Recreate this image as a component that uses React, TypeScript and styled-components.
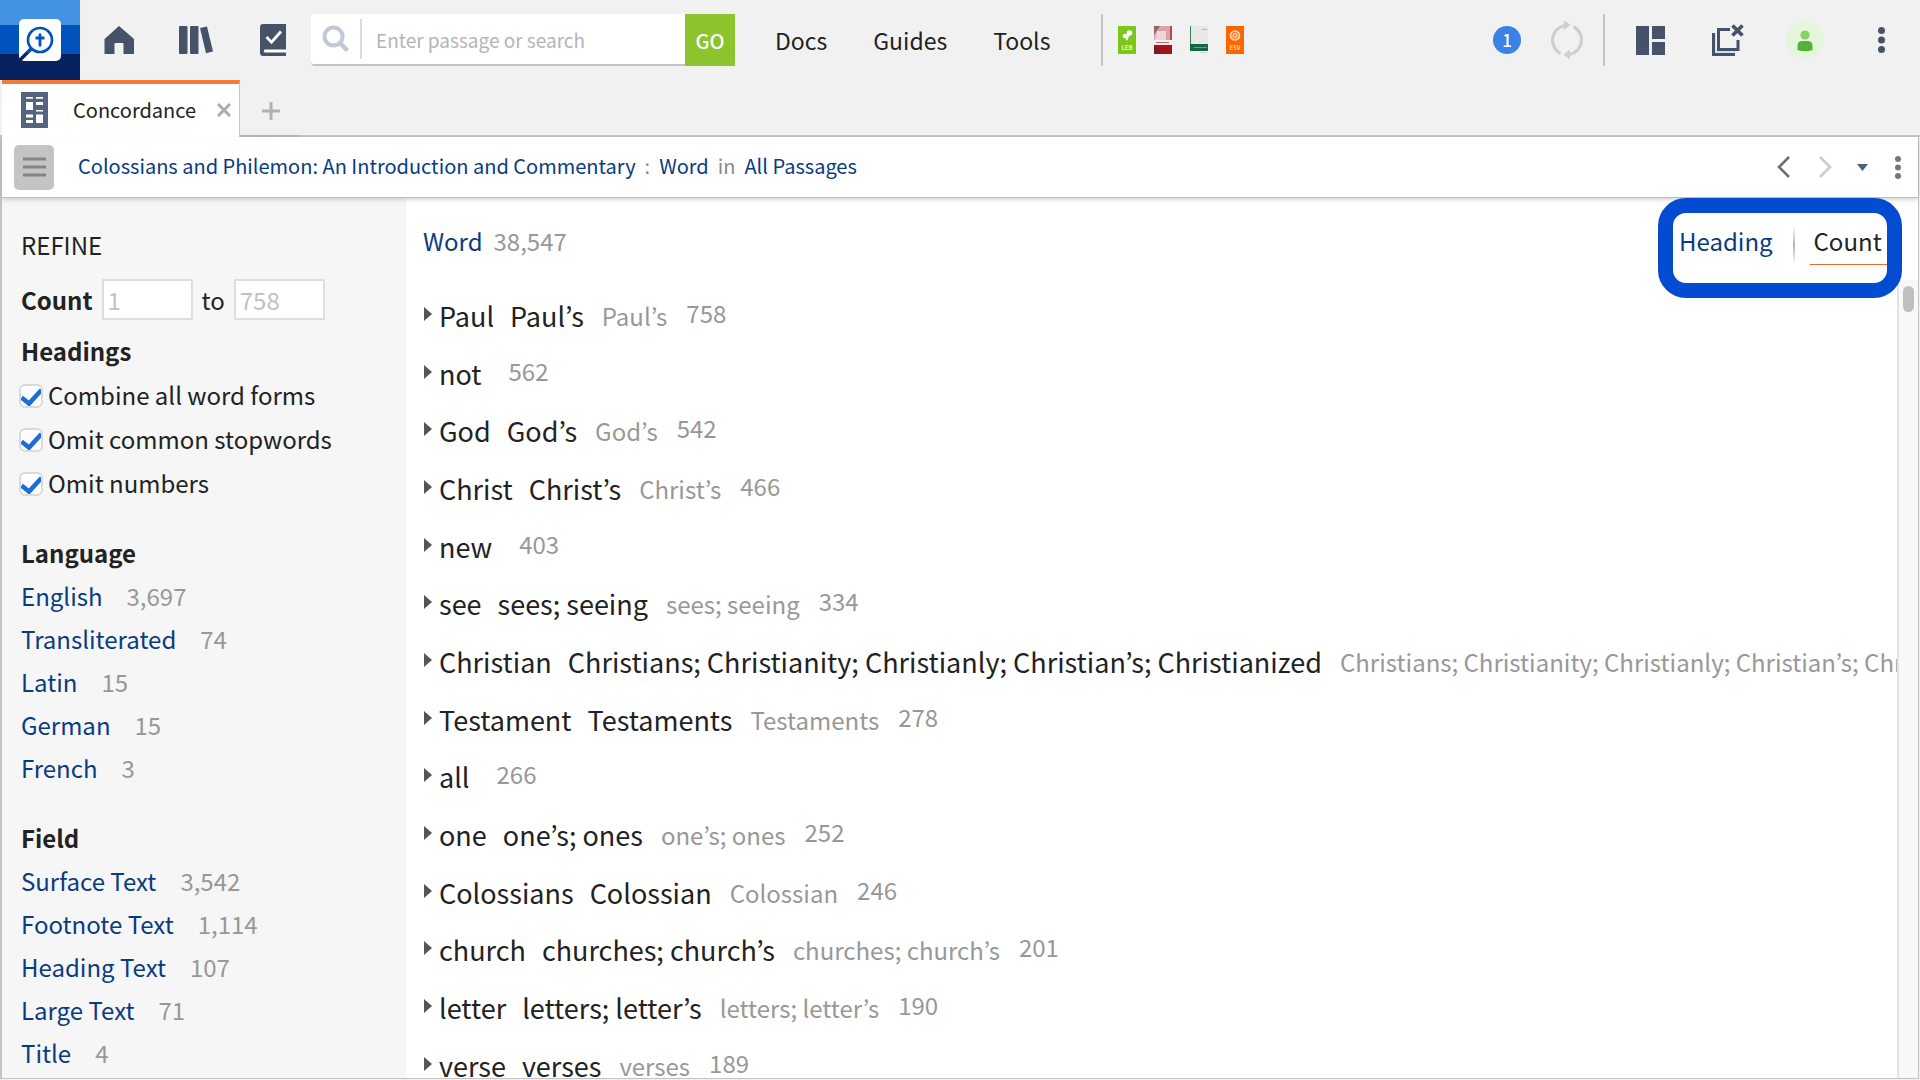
import React from "react";
import styled, { createGlobalStyle } from "styled-components";

const ink = "#222222";
const link = "#083c82";
const slate = "#465268";
const muted = "#989898";
const rule = "#c4c4c4";

const GlobalStyle = createGlobalStyle`
  *, *::before, *::after { box-sizing: border-box; }
  body { margin: 0; background: #f1f1f1; }
  body, button, input {
    font-family: "Noto Sans CJK KR", "Noto Sans", sans-serif;
    color: ${ink};
  }
  button { border: 0; padding: 0; background: none; cursor: pointer; }
  a { color: ${link}; text-decoration: none; }
  ul, h2, h3, p { margin: 0; padding: 0; list-style: none; }
  svg { display: block; }
`;

const Shell = styled.div`
  display: flex;
  flex-direction: column;
  height: 100vh;
  overflow: hidden;
`;

/* ---------- toolbar ---------- */

const Toolbar = styled.header`
  display: flex;
  align-items: center;
  flex: none;
  height: 80px;
`;

const ToolButton = styled.button<{ $w?: number }>`
  display: flex;
  align-items: center;
  justify-content: center;
  width: ${(p) => p.$w ?? 77}px;
  height: 80px;
  flex: none;
`;

const SearchForm = styled.form`
  display: flex;
  height: 52px;
  width: 424px;
  flex: none;
`;

const SearchField = styled.label`
  display: flex;
  align-items: center;
  flex: 1;
  min-width: 0;
  padding-left: 11px;
  background: #fff;
  border-bottom: 2px solid ${rule};
  border-radius: 4px 0 0 4px;
`;

const SearchInput = styled.input`
  flex: 1;
  min-width: 0;
  height: 40px;
  margin-left: 10px;
  padding: 0 0 0 14px;
  border: 0;
  border-left: 2px solid #dcdcdc;
  outline: 0;
  font-size: 19px;
  &::placeholder { color: #b4b4b4; opacity: 1; }
`;

const GoButton = styled.button`
  width: 50px;
  background: #8dc42d;
  color: #fff;
  font-size: 20px;
  font-weight: 500;
`;

const MainNav = styled.nav`
  display: flex;
  gap: 46px;
  padding: 0 51px 0 40px;
  a { color: ${ink}; font-size: 23px; line-height: 36px; }
`;

const Divider = styled.span`
  width: 2px;
  height: 52px;
  flex: none;
  background: ${rule};
`;

const Shortcuts = styled.div`
  display: flex;
  gap: 18px;
  padding-left: 15px;
`;

const ToolbarEnd = styled.div`
  display: flex;
  align-items: center;
  margin-left: auto;
`;

const EndDivider = styled(Divider)`
  margin: 0 7px 0 6px;
`;

const Badge = styled.span`
  display: grid;
  place-items: center;
  width: 28px;
  height: 28px;
  border-radius: 50%;
  background: #3b82e6;
  color: #fff;
  font-size: 17px;
  font-weight: 500;
  line-height: 28px;
`;

/* ---------- tabs ---------- */

const TabBar = styled.div`
  display: flex;
  flex: none;
  height: 57px;
  padding-left: 2px;
  box-shadow: inset 0 -2px 0 ${rule};
`;

const Tab = styled.div`
  display: flex;
  align-items: center;
  width: 238px;
  padding: 0 8px 2px 19px;
  background: #fff;
  border-top: 4px solid #fb7a33;
  border-right: 1px solid ${rule};
`;

const TabName = styled.span`
  flex: 1;
  padding-left: 25px;
  font-size: 20px;
  line-height: 28px;
`;

const AddTab = styled.button`
  display: grid;
  place-items: center;
  width: 58px;
  padding: 6px 0 0 4px;
  border-bottom: 2px solid #b4b4b4;
`;

/* ---------- panel ---------- */

const Panel = styled.main`
  display: flex;
  flex-direction: column;
  flex: 1;
  min-height: 0;
  margin: 0 1px 1px 0;
  border: solid ${rule};
  border-width: 0 1px 1px 2px;
  background: #fff;
`;

const Location = styled.div`
  display: flex;
  align-items: center;
  flex: none;
  height: 61px;
  padding-left: 12px;
  border-bottom: 1px solid #bfbfbf;
  box-shadow: 0 2px 4px rgba(0, 0, 0, 0.16);
  z-index: 1;
`;

const MenuButton = styled.button`
  display: grid;
  place-items: center;
  width: 40px;
  height: 45px;
  border-radius: 5px;
  background: #c4c4c4;
`;

const Crumbs = styled.p`
  display: flex;
  gap: 9px;
  padding: 0 0 2px 24px;
  font-size: 20px;
  line-height: 30px;
  color: #8a8a8a;
`;

const PagerButtons = styled.div`
  display: flex;
  margin-left: auto;
`;

const PagerButton = styled.button<{ $w: number }>`
  display: grid;
  place-items: center;
  width: ${(p) => p.$w}px;
  height: 40px;
`;

const Columns = styled.div`
  display: flex;
  flex: 1;
  min-height: 0;
`;

/* ---------- refine sidebar ---------- */

const Sidebar = styled.aside`
  width: 404px;
  flex: none;
  padding: 25px 16px 0 19px;
  overflow: hidden;
  background: #f6f6f6;
  font-size: 24px;
`;

const SideTitle = styled.h2`
  font-size: 24px;
  font-weight: 400;
  line-height: 44px;
`;

const RangeRow = styled.div`
  display: flex;
  align-items: center;
  gap: 9px;
  height: 41px;
  margin: 12px 0 9px;
`;

const RangeLabel = styled.label<{ $bold?: boolean }>`
  font-weight: ${(p) => (p.$bold ? 700 : 400)};
  line-height: 41px;
`;

const RangeInput = styled.input`
  width: 91px;
  height: 41px;
  padding: 0 4px;
  border: 2px solid #dedede;
  background: #fff;
  font-size: 24px;
  outline: 0;
  &::placeholder { color: #c2c2c2; opacity: 1; }
`;

const GroupTitle = styled.h3`
  font-size: 24px;
  font-weight: 700;
  line-height: 43px;
`;

const Group = styled.section`
  margin-bottom: 27px;
`;

const CheckLabel = styled.label`
  display: flex;
  align-items: center;
  gap: 5px;
  height: 44px;
`;

const CheckBox = styled.input`
  appearance: none;
  width: 24px;
  height: 24px;
  margin: 3px 0 0 -2px;
  border: 2px solid #dadada;
  border-radius: 6px;
  background: #fff;
  &:checked {
    background: #fff
      url("data:image/svg+xml,%3Csvg xmlns='http://www.w3.org/2000/svg' viewBox='0 0 24 24'%3E%3Cpath d='M2.5 13.5l7.5 6L22.5 6' fill='none' stroke='%231f6bd6' stroke-width='4.6'/%3E%3C/svg%3E")
      center / 24px 24px border-box no-repeat;
  }
`;

const FacetRow = styled.li`
  display: flex;
  gap: 24px;
  line-height: 43px;
  color: ${muted};
`;

/* ---------- results ---------- */

const Results = styled.section`
  display: flex;
  flex-direction: column;
  flex: 1;
  min-width: 0;
  position: relative;
`;

const ResultsHead = styled.div`
  display: flex;
  gap: 11px;
  flex: none;
  height: 82px;
  padding: 25px 0 0 17px;
  font-size: 24px;
  line-height: 36px;
  color: ${muted};
`;

const SortBox = styled.div`
  position: absolute;
  z-index: 2;
  top: 0;
  right: 16px;
  display: flex;
  width: 244px;
  height: 100px;
  padding: 9px 0 0 6px;
  border: 15px solid #034bd0;
  border-radius: 28px;
  background: #fff;
`;

const SortButton = styled.button<{ $active?: boolean }>`
  height: 43px;
  padding-bottom: 5px;
  font-size: 24px;
  line-height: 36px;
  color: ${(p) => (p.$active ? ink : link)};
  ${(p) => p.$active && "flex: 1; padding-left: 4px; text-align: left; border-bottom: 1px solid #ee6a2c;"}
`;

const SortRule = styled.span`
  width: 2px;
  height: 40px;
  margin: 3px 15px 0 20px;
  background: linear-gradient(#fff, #b5b5a8 50%, #fff);
`;

const ListArea = styled.div`
  display: flex;
  flex: 1;
  min-height: 0;
`;

const WordList = styled.ul`
  flex: 1;
  min-width: 0;
  padding: 7px 0 0 16px;
  overflow: hidden;
`;

const WordRow = styled.li`
  display: flex;
  align-items: center;
  height: 58px;
  white-space: nowrap;
  &:nth-child(3n + 2) { height: 57px; }
`;

const Expander = styled.button`
  width: 17px;
  height: 32px;
  padding: 0 0 4px 2px;
  flex: none;
`;

const Lemma = styled.span`
  font-size: 27px;
  line-height: 40px;
`;

const Forms = styled(Lemma)`
  margin-left: 16px;
`;

const Variants = styled.span`
  margin-left: 18px;
  font-size: 24px;
  line-height: 40px;
  color: ${muted};
  &:empty { margin-left: 8px; }
`;

const Hits = styled.span`
  margin-left: 19px;
  padding-bottom: 6px;
  font-size: 24px;
  line-height: 36px;
  color: ${muted};
`;

const ScrollTrack = styled.div`
  width: 21px;
  flex: none;
  padding: 6px 3px 0 4px;
  background: #f8f8f8;
  border-left: 2px solid #e4e4e4;
`;

const ScrollThumb = styled.div`
  width: 11px;
  height: 26px;
  border-radius: 6px;
  background: #bfbfbf;
`;

/* ---------- drawings ---------- */

const LogoMark = () => (
  <svg width="80" height="80" viewBox="0 0 80 80" aria-hidden="true">
    <path fill="#4393e2" d="M0 0h80v25H0z" />
    <path fill="#0052bd" d="M0 25h80v29H0z" />
    <path fill="#06235f" d="M0 54h80v26H0z" />
    <rect x="19" y="19" width="42" height="42" rx="5" fill="#fff" />
    <path d="M20 60L31 49" stroke="#06235f" strokeWidth="3.4" />
    <path d="M27 53L32 48" stroke="#0052bd" strokeWidth="3" />
    <circle cx="40" cy="40" r="12" fill="none" stroke="#0052bd" strokeWidth="2.6" />
    <path d="M40 33.500v13M35.500 38h9" stroke="#0052bd" strokeWidth="2.800" />
  </svg>
);

const HomeIcon = () => (
  <svg width="30" height="30" viewBox="0 0 30 30" fill={slate} aria-hidden="true">
    <path d="M15 1L30 14v15H19.500V19q0-1-1-1h-7q-1 0-1 1v10H.5V14z" />
  </svg>
);

const LibraryIcon = () => (
  <svg width="34" height="28" viewBox="0 0 34 28" fill={slate} aria-hidden="true">
    <rect y="0" width="8.500" height="28" rx="1" />
    <rect x="11" width="8.500" height="28" rx="1" />
    <path d="M21 2l7-1.500L34 25.500l-7 1.800z" />
  </svg>
);

const BookCheckIcon = () => (
  <svg width="26" height="32" viewBox="0 0 26 32" aria-hidden="true">
    <path fill={slate} d="M3 0h23v32H3q-3 0-3-3V3q0-3 3-3z" />
    <path fill="#fff" d="M4.500 25.500H26v3H4.500q-1.500-1.500 0-3z" />
    <path d="M6.500 13l5 5.200L21 7.500" fill="none" stroke="#fff" strokeWidth="2.800" />
  </svg>
);

const SearchIcon = () => (
  <svg width="28" height="28" viewBox="0 0 28 28" fill="none" stroke="#c1c8d8" aria-hidden="true">
    <circle cx="11.500" cy="11.500" r="9" strokeWidth="4" />
    <path d="M18 18l7.500 7.500" strokeWidth="4.500" />
  </svg>
);

const LebCover = () => (
  <svg width="18" height="28" viewBox="0 0 18 28" role="img" aria-label="LEB">
    <path fill="#7cc71e" d="M0 0h18v28H0z" />
    <circle cx="11.500" cy="7" r="2.800" fill="#fff" />
    <circle cx="7" cy="10" r="2.300" fill="#fff" />
    <path fill="#fff" d="M7 11l5-3-3 7z" />
    <text x="9" y="23.500" fill="#e4f5c8" fontSize="6" fontWeight="700" textAnchor="middle">LEB</text>
  </svg>
);

const RedCover = () => (
  <svg width="18" height="28" viewBox="0 0 18 28" aria-hidden="true">
    <path fill="#d9a3a8" d="M0 0h18v28H0z" />
    <path fill="#8d6a70" d="M0 0h6L0 9z" />
    <path fill="#b2474f" d="M16 0h2v14h-2z" />
    <path fill="#ecd5d6" d="M3 5h9v9H1z" />
    <path fill="#f6eeee" d="M0 14h18v5H0z" />
    <path fill="#b86a70" d="M2 16h13v1H2z" />
    <path fill="#a5121f" d="M0 19h18v9H0z" />
    <path fill="#7c1a24" d="M0 19l8 9H0z" />
  </svg>
);

const GreenCover = () => (
  <svg width="18" height="28" viewBox="0 0 18 28" aria-hidden="true">
    <path fill="#e6e9e8" d="M0 0h18v25H0z" />
    <path fill="#3f7a60" d="M0 0h1v25H0z" />
    <path fill="#b4b9b7" d="M12 3h5v1h-5z" />
    <path fill="#14683f" d="M0 18h18v7H0z" />
    <path fill="#62a084" d="M4 21h13v1H4z" />
    <path fill="#c4d8ce" d="M10 26h7v1h-7z" />
  </svg>
);

const EsvCover = () => (
  <svg width="18" height="28" viewBox="0 0 18 28" role="img" aria-label="ESV">
    <path fill="#fd6500" d="M0 0h18v28H0z" />
    <circle cx="9" cy="9.500" r="4.500" fill="#fd8a3c" stroke="#ffd9bb" strokeWidth="1.600" />
    <circle cx="9" cy="9.500" r="1.800" fill="none" stroke="#ffd9bb" />
    <text x="9" y="23.500" fill="#ffd9bb" fontSize="6" fontWeight="700" textAnchor="middle">ESV</text>
  </svg>
);

const SyncIcon = () => (
  <svg width="36" height="40" viewBox="0 0 36 40" fill="none" stroke="#cfcfcf" strokeWidth="3.200" aria-hidden="true">
    <path d="M11.500 33.500A15 15 0 0 1 15.500 5.500" />
    <path d="M24.500 6.500A15 15 0 0 1 20.500 34.500" />
    <path d="M15 .5l6.500 4.500-6.500 5zM21 29.500l-6.500 5 6.500 5z" fill="#cfcfcf" stroke="none" />
  </svg>
);

const LayoutIcon = () => (
  <svg width="29" height="29" viewBox="0 0 29 29" fill={slate} aria-hidden="true">
    <path d="M0 0h13v29H0zM16 0h13v13H16zM16 16h13v13H16z" />
  </svg>
);

const CloseWindowsIcon = () => (
  <svg width="32" height="32" viewBox="0 0 32 32" fill="none" aria-hidden="true">
    <path d="M1.500 9v21.500H23" stroke={slate} strokeWidth="3" />
    <path d="M4 26.500h19v2.500H3V10h1z" fill="#cfe0f4" />
    <path d="M18 5.500H6.500v20H26V16" stroke={slate} strokeWidth="3" />
    <path d="M20.500 1.500l10 10M30.500 1.500l-10 10" stroke={slate} strokeWidth="3.600" />
  </svg>
);

const AvatarIcon = () => (
  <svg width="38" height="38" viewBox="0 0 38 38" aria-hidden="true">
    <circle cx="19" cy="19" r="19" fill="#e4f6dc" />
    <circle cx="19" cy="14" r="4.600" fill="#84d164" />
    <path d="M11.500 29v-4q0-5 5-5h5q5 0 5 5v4q-7.500 2.500-15 0z" fill="#54b13a" />
  </svg>
);

const DotsIcon = ({ r, step, color }: { r: number; step: number; color: string }) => {
  const h = 2 * (r + step);
  return (
    <svg width={r * 2} height={h} viewBox={`0 0 ${r * 2} ${h}`} fill={color} aria-hidden="true">
      {[-1, 0, 1].map((n) => (
        <circle key={n} cx={r} cy={h / 2 + n * step} r={r} />
      ))}
    </svg>
  );
};

const ConcordanceIcon = () => (
  <svg width="27" height="36" viewBox="0 0 27 36" aria-hidden="true">
    <path fill="#56637f" d="M0 0h27v36H0z" />
    <path
      fill="#fff"
      d="M5 5h7v1.800H5zM15 5h7v1.800h-7zM5 10h7v8H5zM15 10h7v3h-7zM15 18h7v1.500h-7zM5 22.500h7v3H5zM15 22.500h7V31h-7zM5 28h7v3H5z"
    />
  </svg>
);

const CloseIcon = () => (
  <svg width="14" height="14" viewBox="0 0 14 14" stroke="#adadad" strokeWidth="3" aria-hidden="true">
    <path d="M1 1l12 12M13 1L1 13" />
  </svg>
);

const PlusIcon = () => (
  <svg width="18" height="18" viewBox="0 0 18 18" stroke="#b2b2b2" strokeWidth="3" aria-hidden="true">
    <path d="M9 0v18M0 9h18" />
  </svg>
);

const MenuIcon = () => (
  <svg width="23" height="20" viewBox="0 0 23 20" stroke="#858585" strokeWidth="3" aria-hidden="true">
    <path d="M0 2h23M0 10h23M0 18h23" />
  </svg>
);

const ChevronIcon = ({ next }: { next?: boolean }) => (
  <svg width="13" height="22" viewBox="0 0 13 22" fill="none" stroke={next ? "#cccccc" : "#6f6f6f"} strokeWidth="2.600" aria-hidden="true">
    <path d={next ? "M1 1l10 10L1 21" : "M12 1L2 11l10 10"} />
  </svg>
);

const CaretIcon = () => (
  <svg width="11" height="7" viewBox="0 0 11 7" fill="#4c6080" aria-hidden="true">
    <path d="M0 0h11L5.500 7z" />
  </svg>
);

const TriangleIcon = () => (
  <svg width="8" height="14" viewBox="0 0 8 14" fill="#555" aria-hidden="true">
    <path d="M0 0l8 7-8 7z" />
  </svg>
);

/* ---------- data ---------- */

const facets = [
  {
    title: "Language",
    rows: [["English", "3,697"], ["Transliterated", "74"], ["Latin", "15"], ["German", "15"], ["French", "3"]],
  },
  {
    title: "Field",
    rows: [["Surface Text", "3,542"], ["Footnote Text", "1,114"], ["Heading Text", "107"], ["Large Text", "71"], ["Title", "4"]],
  },
];

const words: { lemma: string; forms?: string; hits?: number }[] = [
  { lemma: "Paul", forms: "Paul’s", hits: 758 },
  { lemma: "not", hits: 562 },
  { lemma: "God", forms: "God’s", hits: 542 },
  { lemma: "Christ", forms: "Christ’s", hits: 466 },
  { lemma: "new", hits: 403 },
  { lemma: "see", forms: "sees; seeing", hits: 334 },
  { lemma: "Christian", forms: "Christians; Christianity; Christianly; Christian’s; Christianized" },
  { lemma: "Testament", forms: "Testaments", hits: 278 },
  { lemma: "all", hits: 266 },
  { lemma: "one", forms: "one’s; ones", hits: 252 },
  { lemma: "Colossians", forms: "Colossian", hits: 246 },
  { lemma: "church", forms: "churches; church’s", hits: 201 },
  { lemma: "letter", forms: "letters; letter’s", hits: 190 },
  { lemma: "verse", forms: "verses", hits: 189 },
];

const options = ["Combine all word forms", "Omit common stopwords", "Omit numbers"];

export default function App() {
  return (
    <>
      <GlobalStyle />
      <Shell>
        <Toolbar>
          <ToolButton $w={80} aria-label="Logos"><LogoMark /></ToolButton>
          <ToolButton aria-label="Home"><HomeIcon /></ToolButton>
          <ToolButton aria-label="Library"><LibraryIcon /></ToolButton>
          <ToolButton aria-label="Factbook"><BookCheckIcon /></ToolButton>
          <SearchForm onSubmit={(e) => e.preventDefault()}>
            <SearchField>
              <SearchIcon />
              <SearchInput aria-label="Search" placeholder="Enter passage or search" />
            </SearchField>
            <GoButton type="submit">GO</GoButton>
          </SearchForm>
          <MainNav>
            <a href="#docs">Docs</a>
            <a href="#guides">Guides</a>
            <a href="#tools">Tools</a>
          </MainNav>
          <Divider />
          <Shortcuts>
            <LebCover />
            <RedCover />
            <GreenCover />
            <EsvCover />
          </Shortcuts>
          <ToolbarEnd>
            <ToolButton $w={60} aria-label="Notifications"><Badge>1</Badge></ToolButton>
            <ToolButton $w={60} aria-label="Sync"><SyncIcon /></ToolButton>
            <EndDivider />
            <ToolButton aria-label="Layouts"><LayoutIcon /></ToolButton>
            <ToolButton aria-label="Close all"><CloseWindowsIcon /></ToolButton>
            <ToolButton aria-label="Account"><AvatarIcon /></ToolButton>
            <ToolButton aria-label="More"><DotsIcon r={3.5} step={9.5} color={slate} /></ToolButton>
          </ToolbarEnd>
        </Toolbar>

        <TabBar>
          <Tab>
            <ConcordanceIcon />
            <TabName>Concordance</TabName>
            <button aria-label="Close tab"><CloseIcon /></button>
          </Tab>
          <AddTab aria-label="New tab"><PlusIcon /></AddTab>
        </TabBar>

        <Panel>
          <Location>
            <MenuButton aria-label="Panel menu"><MenuIcon /></MenuButton>
            <Crumbs>
              <a href="#resource">Colossians and Philemon: An Introduction and Commentary</a>
              <span>:</span>
              <a href="#word">Word</a>
              <span>in</span>
              <a href="#passages">All Passages</a>
            </Crumbs>
            <PagerButtons>
              <PagerButton $w={42} aria-label="Back"><ChevronIcon /></PagerButton>
              <PagerButton $w={42} aria-label="Forward"><ChevronIcon next /></PagerButton>
              <PagerButton $w={32} aria-label="History"><CaretIcon /></PagerButton>
              <PagerButton $w={40} aria-label="Panel options"><DotsIcon r={3} step={8.5} color="#777" /></PagerButton>
            </PagerButtons>
          </Location>

          <Columns>
            <Sidebar>
              <SideTitle>REFINE</SideTitle>
              <RangeRow>
                <RangeLabel $bold htmlFor="min">Count</RangeLabel>
                <RangeInput id="min" placeholder="1" />
                <RangeLabel htmlFor="max">to</RangeLabel>
                <RangeInput id="max" placeholder="758" />
              </RangeRow>
              <Group>
                <GroupTitle>Headings</GroupTitle>
                {options.map((o) => (
                  <CheckLabel key={o}>
                    <CheckBox type="checkbox" defaultChecked />
                    {o}
                  </CheckLabel>
                ))}
              </Group>
              {facets.map((f) => (
                <Group key={f.title}>
                  <GroupTitle>{f.title}</GroupTitle>
                  <ul>
                    {f.rows.map(([name, n]) => (
                      <FacetRow key={name}>
                        <a href="#filter">{name}</a>
                        <span>{n}</span>
                      </FacetRow>
                    ))}
                  </ul>
                </Group>
              ))}
            </Sidebar>

            <Results>
              <ResultsHead>
                <a href="#word">Word</a>
                <span>38,547</span>
              </ResultsHead>
              <SortBox>
                <SortButton>Heading</SortButton>
                <SortRule />
                <SortButton $active>Count</SortButton>
              </SortBox>
              <ListArea>
                <WordList>
                  {words.map((w) => (
                    <WordRow key={w.lemma}>
                      <Expander aria-label={`Expand ${w.lemma}`}><TriangleIcon /></Expander>
                      <Lemma>{w.lemma}</Lemma>
                      {w.forms && <Forms>{w.forms}</Forms>}
                      <Variants>{w.forms}</Variants>
                      {w.hits && <Hits>{w.hits}</Hits>}
                    </WordRow>
                  ))}
                </WordList>
                <ScrollTrack>
                  <ScrollThumb />
                </ScrollTrack>
              </ListArea>
            </Results>
          </Columns>
        </Panel>
      </Shell>
    </>
  );
}
